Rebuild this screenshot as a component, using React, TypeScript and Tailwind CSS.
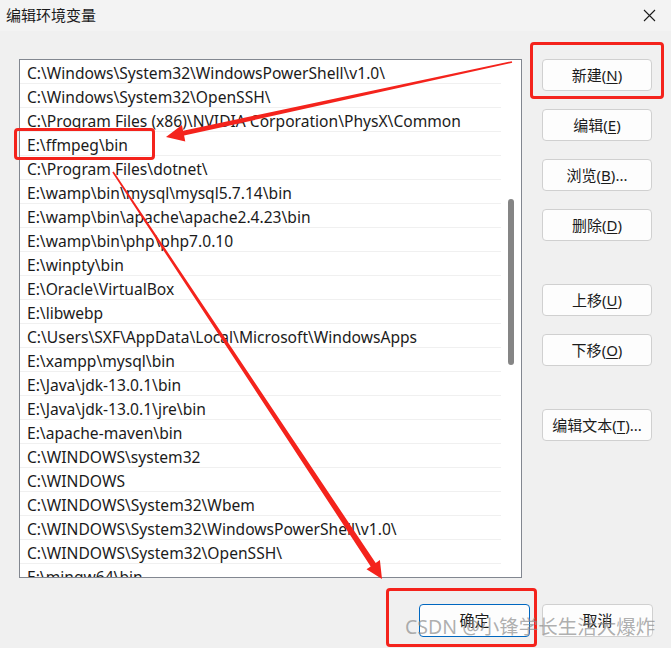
const paths = [
  "C:\\Windows\\System32\\WindowsPowerShell\\v1.0\\",
  "C:\\Windows\\System32\\OpenSSH\\",
  "C:\\Program Files (x86)\\NVIDIA Corporation\\PhysX\\Common",
  "E:\\ffmpeg\\bin",
  "C:\\Program Files\\dotnet\\",
  "E:\\wamp\\bin\\mysql\\mysql5.7.14\\bin",
  "E:\\wamp\\bin\\apache\\apache2.4.23\\bin",
  "E:\\wamp\\bin\\php\\php7.0.10",
  "E:\\winpty\\bin",
  "E:\\Oracle\\VirtualBox",
  "E:\\libwebp",
  "C:\\Users\\SXF\\AppData\\Local\\Microsoft\\WindowsApps",
  "E:\\xampp\\mysql\\bin",
  "E:\\Java\\jdk-13.0.1\\bin",
  "E:\\Java\\jdk-13.0.1\\jre\\bin",
  "E:\\apache-maven\\bin",
  "C:\\WINDOWS\\system32",
  "C:\\WINDOWS",
  "C:\\WINDOWS\\System32\\Wbem",
  "C:\\WINDOWS\\System32\\WindowsPowerShell\\v1.0\\",
  "C:\\WINDOWS\\System32\\OpenSSH\\",
  "E:\\mingw64\\bin",
];

function Btn({
  label,
  hotkey,
  tail = "",
  className = "",
}: {
  label: string;
  hotkey: string;
  tail?: string;
  className?: string;
}) {
  return (
    <button
      className={`w-[110px] h-[32px] rounded-[4px] bg-[#fdfdfd] border border-[#d0d0d0] text-[15px] text-[#1b1b1b] flex items-center justify-center ${className}`}
    >
      {label}(<span className="underline underline-offset-2">{hotkey}</span>){tail}
    </button>
  );
}

function Arrows() {
  return (
    <svg className="absolute inset-0 pointer-events-none" width="671" height="648" viewBox="0 0 671 648">
      {/* arrow to ffmpeg row */}
      <polygon
        fill="#f4231c"
        points="512.2,62.8 184.1,135.6 185.3,141.5 166,137 181.9,125 183.1,130.8 511.8,61.2"
      />
      {/* arrow to OK button */}
      <polygon
        fill="#f4231c"
        points="113.7,171.6 375.7,563 379.9,560 382,579 366.5,569.3 370.7,566.4 112.3,172.4"
      />
    </svg>
  );
}

export default function App() {
  return (
    <div
      className="relative w-[671px] h-[648px] bg-[#f0f0f0] overflow-hidden text-[#1b1b1b]"
      style={{ fontFamily: '"Noto Sans", "Noto Sans CJK SC", sans-serif' }}
    >
      {/* title bar */}
      <div className="h-[31px] bg-[#f3f3f3] flex items-center justify-between pl-[6px] pr-[15px]">
        <span className="text-[15px] leading-none">编辑环境变量</span>
        <svg width="13" height="13" viewBox="0 0 13 13">
          <path d="M1 1 L12 12 M12 1 L1 12" stroke="#1b1b1b" strokeWidth="1.1" />
        </svg>
      </div>

      <div className="flex pl-[19px] pt-[28px]">
        {/* list box */}
        <div className="w-[503px] h-[519px] border border-[#828790] bg-white flex overflow-hidden">
          <div className="flex-1">
            {paths.map((p) => (
              <div
                key={p}
                className="h-[24px] border-b border-[#f0f0f0] pl-[7px] pt-[2px] text-[15.6px] leading-[22px] whitespace-nowrap"
              >
                {p}
              </div>
            ))}
          </div>
          <div className="w-[20px] relative">
            <div className="absolute left-[7px] top-[139px] w-[6px] h-[166px] rounded-full bg-[#858585]" />
          </div>
        </div>

        {/* side buttons */}
        <div className="ml-[20px] flex flex-col">
          <Btn label="新建" hotkey="N" />
          <Btn label="编辑" hotkey="E" className="mt-[18px]" />
          <Btn label="浏览" hotkey="B" tail="..." className="mt-[18px]" />
          <Btn label="删除" hotkey="D" className="mt-[18px]" />
          <Btn label="上移" hotkey="U" className="mt-[43px]" />
          <Btn label="下移" hotkey="O" className="mt-[18px]" />
          <Btn label="编辑文本" hotkey="T" tail="..." className="mt-[43px]" />
        </div>
      </div>

      {/* dialog buttons */}
      <div className="flex justify-end gap-[12px] pr-[18px] pt-[26px]">
        <button className="w-[111px] h-[33px] rounded-[4px] bg-[#fdfdfd] border border-[#0067c0] text-[15px]">确定</button>
        <button className="w-[111px] h-[33px] rounded-[4px] bg-[#fdfdfd] border border-[#d0d0d0] text-[15px]">取消</button>
      </div>

      {/* annotations */}
      <div className="absolute left-[14px] top-[128px] w-[141px] h-[32px] border-[3px] border-[#f4231c] rounded-[4px]" />
      <div className="absolute left-[530px] top-[42px] w-[134px] h-[57px] border-[3px] border-[#f4231c] rounded-[4px]" />
      <div className="absolute left-[386px] top-[588px] w-[151px] h-[59px] border-[3px] border-[#f4231c] rounded-[4px]" />
      <Arrows />

      <div className="absolute left-[405px] top-[617px] text-[19.5px] leading-none text-[#8c8c8c]/70 whitespace-nowrap">
        CSDN @小锋学长生活大爆炸
      </div>
    </div>
  );
}
